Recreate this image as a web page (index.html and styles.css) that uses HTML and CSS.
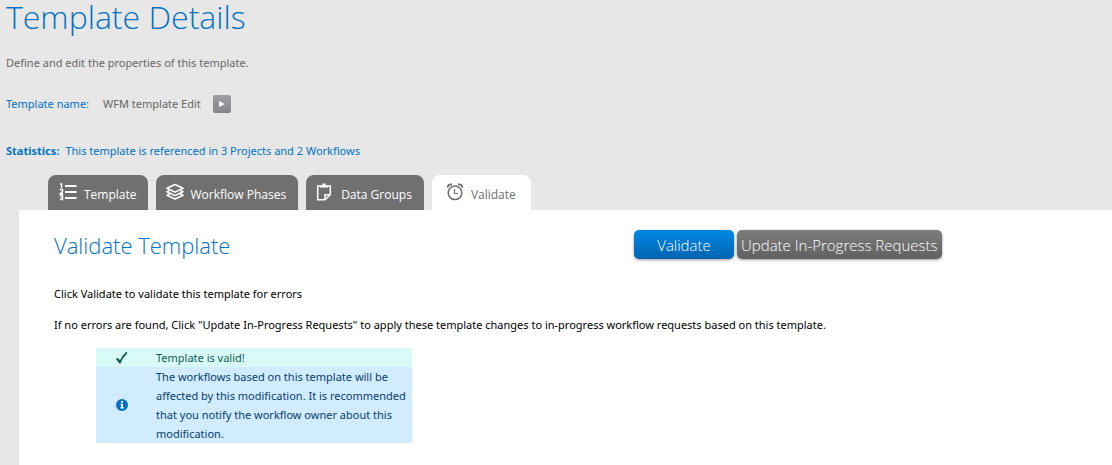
FILE: index.html
```html
<!DOCTYPE html>
<html lang="en">
<head>
<meta charset="utf-8">
<title>Template Details</title>
<link rel="stylesheet" href="styles.css">
</head>
<body>
<header class="page-header">
  <h1 class="page-title">Template Details</h1>
  <p class="page-intro">Define and edit the properties of this template.</p>
  <div class="name-row">
    <span class="name-label">Template name:</span>
    <span class="name-value">WFM template Edit</span>
    <button class="expand-button" type="button" aria-label="Expand template name">
      <svg width="6" height="6" viewBox="0 0 6 6"><path d="M0 0L6 3L0 6Z" fill="#fff"/></svg>
    </button>
  </div>
  <p class="statistics"><strong>Statistics:</strong><span>This template is referenced in 3 Projects and 2 Workflows</span></p>
</header>
<main class="content">
  <nav class="tabs">
    <button class="tab tab-template" type="button">
      <svg class="tab-icon" width="18" height="18" viewBox="0 0 18 18" fill="none" stroke="#fff">
        <path d="M6 3h11.500M6 9h11.500M6 15h11.500" stroke-width="2"/>
        <path d="M1 1h1.500v4M.8 6.500h2.700v2l-2 2h2.500M.8 12h2.700v4.500H.8M1.500 14.300h2" stroke-width="1.400"/>
      </svg>
      <span>Template</span>
    </button>
    <button class="tab tab-phases" type="button">
      <svg class="tab-icon" width="18" height="18" viewBox="0 0 18 18" fill="none" stroke="#fff" stroke-width="1.6" stroke-linejoin="round">
        <path d="M9 1.500L17 5.300L9 9.100L1 5.300Z"/>
        <path d="M3.500 7.600L1 8.800L9 12.600L17 8.800L14.500 7.600M3.500 11L1 12.200L9 16L17 12.200L14.500 11"/>
      </svg>
      <span>Workflow Phases</span>
    </button>
    <button class="tab tab-groups" type="button">
      <svg class="tab-icon" width="18" height="18" viewBox="0 0 18 18" fill="none" stroke="#fff" stroke-width="1.5">
        <path d="M5 3H1.700V16.800H9L14.300 11.800V3H11M9 16.800V11.800H14.300"/>
        <path d="M4 2.200H6.400V.5H9.600V2.200H12V4.400H4Z" fill="#fff" stroke="none"/>
      </svg>
      <span>Data Groups</span>
    </button>
    <button class="tab tab-active" type="button" aria-current="page">
      <svg class="tab-icon" width="18" height="18" viewBox="0 0 18 18" fill="none" stroke="#707070" stroke-width="1.5">
        <circle cx="9" cy="9.800" r="6.800"/>
        <path d="M8.500 6v4.500h3.500" stroke-width="1.200"/>
        <path d="M1.700 4.600C1.500 2.400 3.500 1 6 1.500M16.300 4.600C16.500 2.400 14.500 1 12 1.500" stroke-width="2"/>
      </svg>
      <span>Validate</span>
    </button>
  </nav>
  <section class="panel">
    <div class="panel-head">
      <h2 class="panel-title">Validate Template</h2>
      <div class="actions">
        <button class="action action-primary" type="button">Validate</button>
        <button class="action action-secondary" type="button">Update In-Progress Requests</button>
      </div>
    </div>
    <p class="panel-text">Click Validate to validate this template for errors</p>
    <p class="panel-text">If no errors are found, Click "Update In-Progress Requests" to apply these template changes to in-progress workflow requests based on this template.</p>
    <table class="results">
      <tbody>
        <tr class="result-valid">
          <td class="result-icon"><svg width="12" height="12" viewBox="0 0 12 12" fill="none" stroke="#0e5c50" stroke-linecap="round" stroke-linejoin="round"><path d="M1.500 7.200L4 10.200" stroke-width="2.400"/><path d="M4 10.200C5.500 6.500 7.500 3.500 10.400 1" stroke-width="1.800"/></svg></td>
          <td>Template is valid!</td>
        </tr>
        <tr class="result-info">
          <td class="result-icon"><svg width="12" height="12" viewBox="0 0 12 12"><circle cx="6" cy="6" r="6" fill="#0072c6"/><path d="M5 2h2v1.700H5ZM4.300 4.700H7V8.300H7.800V9.500H4.300V8.300H5V5.800H4.300Z" fill="#fff"/></svg></td>
          <td>The workflows based on this template will be<br>affected by this modification. It is recommended<br>that you notify the workflow owner about this<br>modification.</td>
        </tr>
      </tbody>
    </table>
  </section>
</main>
</body>
</html>
```
FILE: styles.css
```css
* {
  box-sizing: border-box;
}

body {
  margin: 0;
  background: #e7e7e7;
  color: #666;
  font: 11px/18px "Segoe UI", "Noto Sans", "Open Sans", sans-serif;
}

h1, h2, p {
  margin: 0;
}

button {
  margin: 0;
  border: 0;
  font-family: inherit;
  cursor: pointer;
}

.page-header {
  padding: 0 6px;
}

.page-title {
  color: #0072c6;
  font-family: "Segoe UI Light", "Open Sans", sans-serif;
  font-size: 32px;
  font-weight: 300;
  line-height: 34px;
}

.page-intro {
  margin-top: 20px;
}

.name-row {
  display: flex;
  align-items: center;
  margin-top: 23px;
}

.name-label {
  margin-right: 14px;
  color: #0072c6;
}

.expand-button {
  display: flex;
  align-items: center;
  justify-content: center;
  width: 18px;
  height: 18px;
  margin-left: 12px;
  padding: 0;
  border-radius: 2px;
  background: linear-gradient(#a0a0a4, #858589);
}

.statistics {
  display: flex;
  gap: 6px;
  margin-top: 29px;
  color: #0072c6;
}

.content {
  margin: 15px 0 0 19px;
}

.tabs {
  display: flex;
  gap: 8px;
  padding-left: 29px;
}

.tab {
  display: flex;
  align-items: center;
  gap: 7px;
  height: 35px;
  padding: 0 11px 0 10px;
  border-radius: 8px 8px 0 0;
  background: #707070;
  color: #fff;
  font-family: "Segoe UI", "Open Sans", sans-serif;
  font-size: 12px;
  line-height: 18px;
  white-space: nowrap;
}

.tab span {
  padding-top: 4px;
}

.tab-icon {
  flex: none;
  margin-bottom: 2px;
}

.tab-template {
  padding: 0 11px;
}

.tab-phases {
  padding-right: 12px;
}

.tab-groups {
  padding-right: 12px;
}

.tab-active {
  padding: 0 15px 0 14px;
  background: #fff;
  color: #707070;
}

.panel {
  min-height: 255px;
  padding: 20px 35px;
  background: #fff;
  color: #000;
}

.panel-head {
  display: flex;
  margin-bottom: 24px;
}

.panel-title {
  flex: none;
  width: 580px;
  color: #0072c6;
  font-family: "Segoe UI Light", "Open Sans", sans-serif;
  font-size: 22px;
  font-weight: 300;
  line-height: 31px;
}

.actions {
  display: flex;
  flex: none;
  gap: 3px;
}

.action {
  height: 29px;
  padding: 0 4px;
  border-radius: 5px;
  box-shadow: 0 1px 3px rgba(0, 0, 0, 0.4);
  color: #fff;
  font-family: "Segoe UI Light", "Open Sans", sans-serif;
  font-size: 15px;
  font-weight: 300;
}

.action-primary {
  width: 100px;
  background: linear-gradient(#0088e4, #0064b0);
}

.action-secondary {
  background: linear-gradient(#7d7d7d, #606060);
}

.panel-text {
  margin-bottom: 13px;
}

.results {
  width: 316px;
  margin: 14px 0 0 42px;
  border-collapse: collapse;
  line-height: 19px;
}

.results td {
  padding: 0;
  white-space: nowrap;
}

.results .result-icon {
  width: 60px;
  padding-left: 20px;
}

.result-icon svg {
  display: block;
}

.result-valid {
  background: #d9fbf8;
  color: #0e5c50;
}

.result-info {
  background: #d1ebff;
  color: #063f6b;
}
```
